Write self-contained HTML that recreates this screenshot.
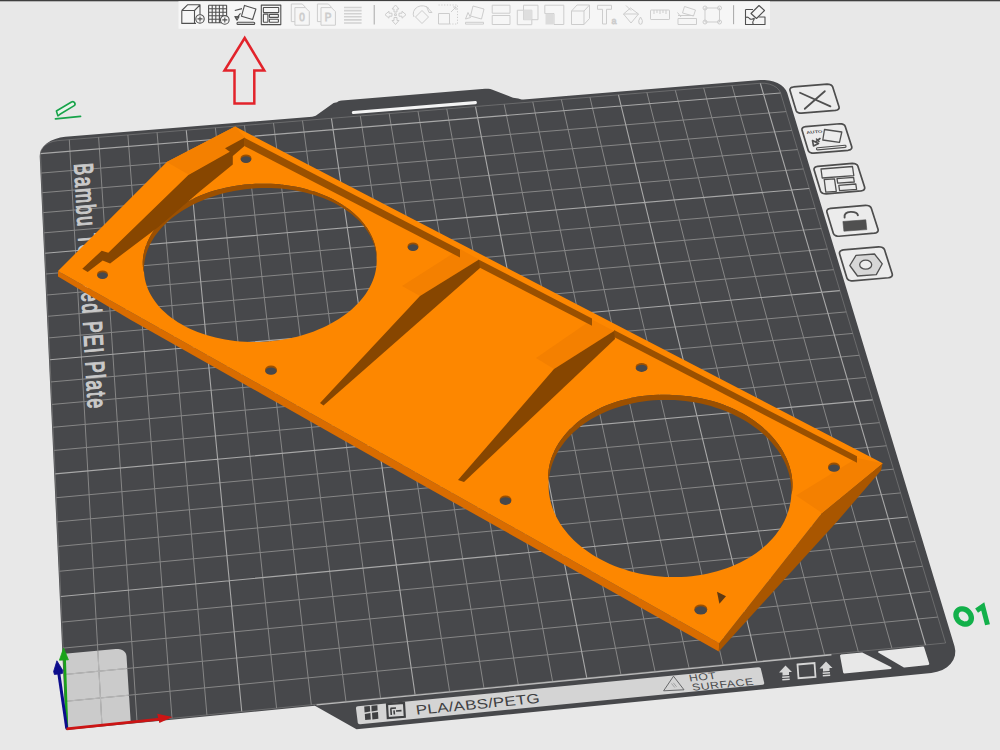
<!DOCTYPE html><html><head><meta charset="utf-8"><style>
html,body{margin:0;padding:0;background:#e8e8e8;width:1000px;height:750px;overflow:hidden}
svg{position:absolute;left:0;top:0}
text{opacity:0.999}
</style></head><body>
<svg width="1000" height="750" viewBox="0 0 1000 750">
<rect x="0" y="0" width="1000" height="750" fill="#e8e8e8"/>
<path d="M65.86,730.01 L39.71,156.21 L40.07,152.79 L41.43,149.41 L43.73,146.22 L46.90,143.34 L50.80,140.87 L55.29,138.91 L60.19,137.53 L65.32,136.78 L312.19,116.64 L312.19,116.64 L314.04,116.32 L315.71,115.71 L317.11,114.84 L333.58,102.96 L337.05,102.18 L338.43,101.31 L340.10,100.71 L341.93,100.40 L485.08,88.77 L486.51,88.66 L488.38,88.66 L490.20,88.99 L491.82,89.60 L513.04,97.79 L518.22,98.44 L519.85,99.06 L521.67,99.38 L523.56,99.39 L760.24,80.08 L764.73,80.00 L769.21,80.49 L773.52,81.53 L777.49,83.08 L780.97,85.08 L783.83,87.46 L785.96,90.13 L787.26,92.98 L954.51,646.18 L955.32,650.84 L954.94,655.45 L953.38,659.83 L950.69,663.80 L946.97,667.22 L942.37,669.94 L937.07,671.86 L931.27,672.90 L356.51,729.28 L314.91,705.76 Z" fill="#47484b"/>
<path d="M67.91,728.43 L130.71,722.32 L126.46,655.80 L125.98,653.79 L124.83,651.99 L123.09,650.52 L120.88,649.47 L118.34,648.92 L115.66,648.91 L64.46,653.79 Z" fill="#cbcbcb"/>
<path d="M101.97,725.12L69.31,139.71M137.02,721.70L98.61,137.32M172.00,718.30L127.88,134.93M206.92,714.90L157.09,132.54M276.56,708.12L215.39,127.78M311.29,704.74L244.47,125.41M345.95,701.37L273.51,123.03M380.54,698.00L302.50,120.67M449.54,691.29L360.34,115.94M483.95,687.94L389.20,113.58M518.29,684.60L418.01,111.23M552.57,681.26L446.78,108.88M620.93,674.61L504.18,104.19M655.02,671.29L532.81,101.85M689.05,667.98L561.40,99.52M723.01,664.67L589.95,97.19M790.75,658.08L646.91,92.54M824.53,654.79L675.32,90.22M858.24,651.51L703.70,87.90M891.90,648.24L732.02,85.58M65.60,701.32L937.83,617.06M64.37,674.51L930.16,591.50M63.16,648.11L922.60,566.31M61.97,622.11L915.16,541.49M59.64,571.24L900.59,492.93M58.50,546.37L893.46,469.17M57.37,521.86L886.43,445.75M56.26,497.70L879.50,422.65M54.09,450.41L865.93,377.43M53.03,427.27L859.29,355.29M51.99,404.45L852.73,333.45M50.95,381.95L846.27,311.91M48.93,337.88L833.61,269.69M47.94,316.29L827.40,249.00M46.97,294.99L821.27,228.59M46.00,273.98L815.23,208.45M44.11,232.80L803.38,168.95M43.19,212.62L797.57,149.59M42.27,192.70L791.83,130.47M41.37,173.04L786.17,111.59" stroke="#868686" stroke-width="1" fill="none"/>
<path d="M241.77,711.51L186.26,130.16M415.08,694.64L331.44,118.30M586.78,677.93L475.50,106.54M756.91,661.37L618.45,94.86M925.49,644.97L760.31,83.27M60.79,596.49L907.82,517.04M55.17,473.89L872.67,399.88M49.94,359.76L839.90,290.65M45.05,253.26L809.27,188.57M40.48,153.63L780.58,92.96" stroke="#a8a8a8" stroke-width="1.1" fill="none"/>
<path d="M945.62,643.01 L780.58,92.96 L779.14,90.13 L776.64,87.60 L773.26,85.53 L769.22,84.06 L764.81,83.29 L760.31,83.27 L57.57,140.67 L53.03,141.43 L48.84,142.93 L45.27,145.05 L42.58,147.67 L40.95,150.59 L40.48,153.63 L66.85,728.53 Z" stroke="#868686" stroke-width="0.8" fill="none" opacity="0.7"/>
<path d="M101.92,724.29L97.85,651.39M67.35,701.15L128.28,695.26M66.10,674.35L126.58,668.55" stroke="#bababa" stroke-width="1" fill="none"/>
<line x1="353.39" y1="112.52" x2="475.31" y2="102.57" stroke="#f4f4f4" stroke-width="3.2" stroke-linecap="round"/>
<path d="M760.76,668.59 L759.89,667.52 L758.34,667.20 L357.79,706.24 L356.38,706.86 L355.92,708.07 L357.80,722.78 L358.56,723.88 L360.10,724.21 L762.63,684.78 L763.96,684.16 L764.28,682.97 Z" fill="#d4d4d4"/>
<line x1="316.57" y1="704.91" x2="831.45" y2="654.79" stroke="#b9b9b9" stroke-width="1.4"/>
<path d="M841.02,655.62 L862.26,653.55 L890.53,667.88 L844.15,672.42 Z" fill="#e8e8e8" stroke="#e8e8e8" stroke-width="2" stroke-linejoin="round"/>
<path d="M879.11,651.91 L923.16,647.62 L928.28,663.91 L904.39,666.52 Z" fill="#e8e8e8" stroke="#e8e8e8" stroke-width="2" stroke-linejoin="round"/>
<path d="M779,672.5 L785.5,665.5 L792,672.0 L789,672.0 L789,675.0 L782.5,675.5 L782.5,672.5 Z" fill="#d6d6d6"/><path d="M782.2,677.3 L789.5,676.8 M782.3,679.8 L789.7,679.3" stroke="#d6d6d6" stroke-width="1.5"/>
<path d="M819.5,668.5 L826.0,661.5 L832.5,668.0 L829.5,668.0 L829.5,671.0 L823.0,671.5 L823.0,668.5 Z" fill="#d6d6d6"/><path d="M822.7,673.3 L830.0,672.8 M822.8,675.8 L830.2,675.3" stroke="#d6d6d6" stroke-width="1.5"/>
<path d="M797.5,664.5 L814.5,663 L815.5,677 L798.5,678.2 Z" fill="none" stroke="#d6d6d6" stroke-width="1.8"/>
<text transform="matrix(3.4694,-0.3395,0.3938,2.7213,416.59,714.81)" font-family="Liberation Sans" font-size="4.9" fill="#3f4042" font-weight="normal" text-anchor="start" letter-spacing="0.05" >PLA/ABS/PETG</text>
<path d="M364.2,706.5 L369.8,706 L370.2,711.6 L364.6,712.6 Z M371.4,705.8 L377.4,705.3 L377.6,710.6 L371.6,711.4 Z M364.8,714 L370.4,713 L370.8,719.6 L365.2,720 Z M372,712.8 L378,712 L378.4,718.8 L372.4,719.4 Z" fill="#3f4042"/>
<path d="M387,704.2 L404,702.8 L404.8,716.8 L387.8,718 Z" fill="none" stroke="#3f4042" stroke-width="2.2"/>
<path d="M390.5,708.4 L396,708 M390.8,708.4 L391.3,715 M394,710.3 L394.4,714.5 M396,711 L401.5,710.6" fill="none" stroke="#3f4042" stroke-width="1.6"/>
<path d="M673.5,676.2 L684,689.8 L663.6,690.8 Z" fill="none" stroke="#5a5b5d" stroke-width="0.9" stroke-linejoin="round"/>
<path d="M671.5,683.5 L674.8,687.5 M673.3,682.8 L676.6,686.8" fill="none" stroke="#8a8b8d" stroke-width="0.7"/>
<text transform="matrix(3.4124,-0.3334,0.5979,2.6710,689.65,681.52)" font-family="Liberation Sans" font-size="3.6" fill="#4a4b4d" font-weight="normal" text-anchor="start" letter-spacing="0.15" >HOT</text>
<text transform="matrix(3.4211,-0.3351,0.6019,2.6851,692.77,690.80)" font-family="Liberation Sans" font-size="3.6" fill="#4a4b4d" font-weight="normal" text-anchor="start" letter-spacing="0.15" >SURFACE</text>
<text transform="matrix(0.1106,1.9410,-2.9566,0.2434,74.23,164.07)" font-family="Liberation Sans" font-size="9.0" fill="#c9c9c9" font-weight="normal" text-anchor="start" letter-spacing="0.9" stroke="#c9c9c9" stroke-width="0.45">Bambu Textured PEI Plate</text>
<path d="M970.97,615.71 L970.46,614.41 L969.73,613.16 L968.82,612.02 L967.76,611.01 L966.57,610.16 L965.29,609.50 L963.97,609.06 L962.63,608.84 L961.33,608.84 L960.10,609.08 L958.97,609.54 L957.99,610.21 L957.18,611.07 L956.56,612.09 L956.16,613.24 L955.99,614.49 L956.05,615.80 L956.34,617.13 L956.86,618.44 L957.58,619.69 L958.49,620.84 L959.55,621.85 L960.74,622.70 L962.02,623.37 L963.35,623.82 L964.69,624.04 L966.00,624.03 L967.24,623.79 L968.37,623.33 L969.35,622.66 L970.16,621.79 L970.78,620.77 L971.17,619.61 L971.34,618.36 L971.27,617.04 Z" fill="none" stroke="#12b04a" stroke-width="5.4"/>
<path d="M976.59,610.67 L982.76,606.38 L987.50,624.75" fill="none" stroke="#12b04a" stroke-width="5.0" stroke-linejoin="miter"/>
<path d="M832.63,86.80 L831.93,85.70 L830.64,84.82 L828.98,84.30 L827.18,84.22 L793.56,86.97 L791.90,87.34 L790.63,88.10 L789.94,89.14 L789.93,90.30 L796.09,110.58 L796.79,111.70 L798.07,112.59 L799.75,113.12 L801.57,113.21 L835.48,110.41 L837.15,110.03 L838.42,109.26 L839.10,108.21 L839.08,107.04 Z" fill="#ececec" stroke="#4d4d4d" stroke-width="1.7" stroke-linejoin="round"/>
<path d="M845.25,126.42 L844.53,125.29 L843.23,124.39 L841.54,123.86 L839.71,123.77 L805.65,126.60 L803.97,126.97 L802.68,127.76 L801.99,128.82 L801.99,130.01 L808.20,150.47 L808.91,151.62 L810.21,152.54 L811.92,153.08 L813.76,153.17 L848.12,150.29 L849.81,149.91 L851.09,149.12 L851.78,148.04 L851.75,146.83 Z" fill="#ececec" stroke="#4d4d4d" stroke-width="1.7" stroke-linejoin="round"/>
<path d="M857.91,166.16 L857.18,165.00 L855.85,164.08 L854.13,163.53 L852.29,163.44 L817.78,166.34 L816.07,166.73 L814.77,167.53 L814.07,168.63 L814.08,169.85 L820.52,191.07 L821.24,192.25 L822.57,193.19 L824.30,193.75 L826.17,193.84 L860.98,190.88 L862.70,190.49 L863.99,189.68 L864.68,188.57 L864.65,187.33 Z" fill="#ececec" stroke="#4d4d4d" stroke-width="1.7" stroke-linejoin="round"/>
<path d="M871.30,208.19 L870.55,207.00 L869.20,206.04 L867.46,205.48 L865.58,205.39 L830.60,208.37 L828.88,208.77 L827.56,209.59 L826.85,210.72 L826.87,211.98 L833.37,233.39 L834.11,234.60 L835.46,235.57 L837.21,236.15 L839.10,236.24 L874.39,233.20 L876.13,232.80 L877.44,231.96 L878.13,230.82 L878.10,229.55 Z" fill="#ececec" stroke="#4d4d4d" stroke-width="1.7" stroke-linejoin="round"/>
<path d="M884.54,249.77 L883.78,248.54 L882.40,247.56 L880.63,246.98 L878.73,246.89 L843.29,249.95 L841.54,250.36 L840.21,251.21 L839.50,252.37 L839.52,253.66 L846.89,277.96 L847.65,279.21 L849.02,280.21 L850.81,280.80 L852.73,280.89 L888.52,277.77 L890.28,277.36 L891.61,276.50 L892.30,275.32 L892.26,274.01 Z" fill="#ececec" stroke="#4d4d4d" stroke-width="1.7" stroke-linejoin="round"/>
<path d="M800,92.8 L830.4,106.4 M804.8,108.8 L824.8,91.2" stroke="#505050" fill="none" stroke-linejoin="round" stroke-linecap="round" stroke-width="1.8"/>
<path d="M824.5,129.5 L841.8,132 L839.5,142.4 L822.8,140 Z" stroke="#505050" fill="none" stroke-linejoin="round" stroke-linecap="round" stroke-width="1.3"/>
<path d="M817.5,148.8 L845,146.3" stroke="#505050" fill="none" stroke-linejoin="round" stroke-linecap="round" stroke-width="3.2"/>
<path d="M817.5,148.8 L845,146.3" stroke="#ececec" stroke-width="1" stroke-linecap="round"/>
<text transform="matrix(2.8718,-0.2388,0.5800,1.9034,806.71,133.91)" font-family="Liberation Sans" font-size="2.0" fill="#505050" font-weight="bold" text-anchor="start" letter-spacing="0" opacity="0.99">AUTO</text>
<path d="M812.5,140.5 L818.5,143.5 L813.5,146 Z M815.5,142 L820,138.5 M816.5,139 L819,141.5" stroke="#505050" fill="none" stroke-linejoin="round" stroke-linecap="round" stroke-width="1.6" fill="#505050"/>
<path d="M821,169 L852.5,166.5 L853.8,175.7 L822.2,178 Z" stroke="#505050" fill="none" stroke-linejoin="round" stroke-linecap="round" stroke-width="1.3"/>
<path d="M824.2,179.5 L834.5,178.8 L836.3,191.3 L825.8,192.1 Z" stroke="#505050" fill="none" stroke-linejoin="round" stroke-linecap="round" stroke-width="1.3"/>
<path d="M837,178.6 L853.6,177.4 L854.3,182 L837.7,183.2 Z" stroke="#505050" fill="none" stroke-linejoin="round" stroke-linecap="round" stroke-width="1.3"/>
<path d="M838.8,185.4 L855.8,184 L856.6,189.3 L839.6,190.6 Z" stroke="#505050" fill="none" stroke-linejoin="round" stroke-linecap="round" stroke-width="1.3"/>
<path d="M842.9,221.5 L865.8,219.8 L866.8,229.6 L843.9,231.2 Z" fill="#505050" stroke="#505050" stroke-width="0.6"/>
<path d="M844.6,217.6 Q843.8,212.2 850.5,211.9 Q857.2,211.7 857.9,215.2" stroke="#505050" fill="none" stroke-linejoin="round" stroke-linecap="round" stroke-width="1.9"/>
<path d="M849.8,265.5 L856,255.3 L874.5,254 L882.3,263.8 L876.3,274.6 L857.5,276 Z" fill="#d7d7d7" stroke="#505050" fill="none" stroke-linejoin="round" stroke-linecap="round" stroke-width="1.3"/>
<ellipse cx="865.7" cy="264.7" rx="6" ry="4.5" fill="#ececec" stroke="#505050" fill="none" stroke-linejoin="round" stroke-linecap="round" stroke-width="1.3"/>
<polygon points="58.0,271.0 719.2,643.2 718.8,651.5 420.0,483.5 130.0,319.5 58.0,276.5" fill="#d96c00"/>
<polygon points="882.6,463.3 822.0,513.0 719.2,643.2 718.8,651.5 838.0,520.5 881.0,470.5" fill="#a95600"/>
<path d="M235.2,126.6 L882.6,463.3 L822.0,513.0 L719.2,643.2 L58.0,271.0 L166.8,162.0 Z M376.57,257.68 L376.67,261.04 L376.55,264.39 L376.20,267.75 L375.64,271.11 L374.86,274.45 L373.86,277.77 L372.64,281.07 L371.21,284.34 L369.56,287.57 L367.71,290.76 L365.66,293.90 L363.40,296.99 L360.95,300.01 L358.31,302.97 L355.48,305.86 L352.47,308.66 L349.28,311.39 L345.93,314.03 L342.41,316.57 L338.73,319.01 L334.91,321.36 L330.94,323.59 L326.84,325.71 L322.61,327.72 L318.27,329.61 L313.81,331.38 L309.25,333.01 L304.60,334.52 L299.86,335.90 L295.05,337.14 L290.17,338.25 L285.24,339.21 L280.26,340.04 L275.24,340.72 L270.19,341.26 L265.12,341.65 L260.05,341.89 L254.97,341.99 L249.90,341.95 L244.86,341.75 L239.84,341.41 L234.87,340.93 L229.94,340.30 L225.06,339.53 L220.26,338.61 L215.53,337.56 L210.89,336.37 L206.34,335.04 L201.90,333.58 L197.56,331.98 L193.35,330.26 L189.26,328.42 L185.30,326.45 L181.49,324.37 L177.83,322.18 L174.33,319.87 L170.99,317.46 L167.82,314.96 L164.83,312.35 L162.02,309.66 L159.39,306.88 L156.96,304.02 L154.73,301.09 L152.69,298.09 L150.86,295.03 L149.24,291.90 L147.83,288.73 L146.63,285.51 L145.65,282.26 L144.89,278.97 L144.35,275.65 L144.03,272.32 L143.15,268.96 L142.79,265.52 L142.73,262.02 L142.95,258.49 L143.45,254.94 L144.20,251.38 L145.21,247.82 L146.47,244.28 L147.98,240.77 L149.73,237.29 L151.72,233.87 L153.95,230.51 L156.39,227.21 L159.05,224.00 L161.92,220.86 L165.00,217.82 L168.26,214.88 L171.72,212.05 L175.34,209.32 L179.14,206.71 L183.10,204.23 L187.21,201.87 L191.46,199.64 L195.84,197.54 L200.34,195.59 L204.96,193.77 L209.68,192.10 L214.49,190.58 L219.39,189.20 L224.37,187.97 L229.40,186.90 L234.49,185.98 L239.63,185.22 L244.80,184.61 L249.99,184.16 L255.20,183.86 L260.40,183.69 L265.61,183.67 L270.80,183.81 L275.96,184.11 L281.09,184.56 L286.18,185.16 L291.21,185.91 L296.17,186.81 L301.07,187.86 L305.88,189.05 L310.60,190.38 L315.22,191.85 L319.74,193.46 L324.13,195.21 L328.40,197.08 L332.53,199.07 L336.52,201.19 L340.36,203.43 L344.05,205.78 L347.57,208.24 L350.92,210.80 L354.09,213.47 L357.07,216.22 L359.87,219.06 L362.46,221.99 L364.86,224.99 L367.05,228.06 L369.03,231.20 L370.79,234.39 L372.33,237.63 L373.64,240.91 L374.73,244.23 L375.58,247.58 L376.19,250.94 L376.55,254.31 Z M791.33,494.86 L791.02,498.71 L790.47,502.54 L789.69,506.34 L788.69,510.11 L787.45,513.84 L786.00,517.52 L784.33,521.14 L782.43,524.70 L780.33,528.20 L778.01,531.61 L775.49,534.95 L772.76,538.20 L769.84,541.35 L766.73,544.40 L763.44,547.35 L759.97,550.18 L756.33,552.90 L752.52,555.49 L748.56,557.96 L744.44,560.29 L740.19,562.49 L735.80,564.54 L731.29,566.45 L726.66,568.22 L721.92,569.83 L717.08,571.29 L712.15,572.58 L707.15,573.72 L702.07,574.70 L696.93,575.51 L691.74,576.16 L686.51,576.64 L681.25,576.95 L675.96,577.10 L670.67,577.07 L665.37,576.88 L660.08,576.52 L654.81,575.99 L649.57,575.29 L644.37,574.43 L639.22,573.41 L634.12,572.22 L629.10,570.88 L624.15,569.37 L619.29,567.72 L614.52,565.91 L609.87,563.96 L605.32,561.86 L600.90,559.62 L596.61,557.25 L592.46,554.74 L588.46,552.11 L584.61,549.36 L580.93,546.50 L577.41,543.52 L574.08,540.44 L570.92,537.26 L567.95,533.98 L565.18,530.62 L562.61,527.18 L560.24,523.67 L558.08,520.09 L556.13,516.45 L554.40,512.75 L552.89,509.01 L551.60,505.23 L550.54,501.42 L549.71,497.58 L549.10,493.73 L548.72,489.87 L548.58,486.00 L548.67,482.14 L548.15,478.20 L548.19,474.23 L548.56,470.25 L549.21,466.26 L550.15,462.29 L551.35,458.35 L552.82,454.44 L554.55,450.59 L556.53,446.79 L558.76,443.07 L561.23,439.43 L563.93,435.89 L566.86,432.44 L570.00,429.11 L573.35,425.90 L576.91,422.82 L580.65,419.87 L584.58,417.06 L588.68,414.40 L592.95,411.89 L597.36,409.54 L601.92,407.35 L606.61,405.32 L611.43,403.47 L616.36,401.78 L621.38,400.27 L626.50,398.94 L631.70,397.79 L636.97,396.82 L642.30,396.03 L647.67,395.42 L653.09,395.00 L658.53,394.76 L663.98,394.70 L669.44,394.82 L674.89,395.13 L680.35,395.44 L685.78,395.93 L691.19,396.60 L696.56,397.45 L701.89,398.47 L707.15,399.68 L712.35,401.05 L717.47,402.60 L722.50,404.32 L727.43,406.20 L732.24,408.25 L736.94,410.46 L741.51,412.82 L745.94,415.34 L750.22,418.00 L754.34,420.80 L758.29,423.74 L762.07,426.81 L765.66,430.00 L769.06,433.31 L772.25,436.73 L775.24,440.25 L778.01,443.87 L780.55,447.57 L782.87,451.35 L784.95,455.19 L786.78,459.09 L788.37,463.04 L789.71,467.02 L790.79,471.03 L791.61,475.05 L792.16,479.07 L792.45,483.07 L792.45,487.05 L792.15,490.99 Z" fill="#fd8700" fill-rule="evenodd"/>
<path d="M376.57,257.68 L376.67,261.04 L376.55,264.39 L376.20,267.75 L375.64,271.11 L374.86,274.45 L373.86,277.77 L372.64,281.07 L371.21,284.34 L369.56,287.57 L367.71,290.76 L365.66,293.90 L363.40,296.99 L360.95,300.01 L358.31,302.97 L355.48,305.86 L352.47,308.66 L349.28,311.39 L345.93,314.03 L342.41,316.57 L338.73,319.01 L334.91,321.36 L330.94,323.59 L326.84,325.71 L322.61,327.72 L318.27,329.61 L313.81,331.38 L309.25,333.01 L304.60,334.52 L299.86,335.90 L295.05,337.14 L290.17,338.25 L285.24,339.21 L280.26,340.04 L275.24,340.72 L270.19,341.26 L265.12,341.65 L260.05,341.89 L254.97,341.99 L249.90,341.95 L244.86,341.75 L239.84,341.41 L234.87,340.93 L229.94,340.30 L225.06,339.53 L220.26,338.61 L215.53,337.56 L210.89,336.37 L206.34,335.04 L201.90,333.58 L197.56,331.98 L193.35,330.26 L189.26,328.42 L185.30,326.45 L181.49,324.37 L177.83,322.18 L174.33,319.87 L170.99,317.46 L167.82,314.96 L164.83,312.35 L162.02,309.66 L159.39,306.88 L156.96,304.02 L154.73,301.09 L152.69,298.09 L150.86,295.03 L149.24,291.90 L147.83,288.73 L146.63,285.51 L145.65,282.26 L144.89,278.97 L144.35,275.65 L144.03,272.32 L143.15,268.96 L142.79,265.52 L142.73,262.02 L142.95,258.49 L143.45,254.94 L144.20,251.38 L145.21,247.82 L146.47,244.28 L147.98,240.77 L149.73,237.29 L151.72,233.87 L153.95,230.51 L156.39,227.21 L159.05,224.00 L161.92,220.86 L165.00,217.82 L168.26,214.88 L171.72,212.05 L175.34,209.32 L179.14,206.71 L183.10,204.23 L187.21,201.87 L191.46,199.64 L195.84,197.54 L200.34,195.59 L204.96,193.77 L209.68,192.10 L214.49,190.58 L219.39,189.20 L224.37,187.97 L229.40,186.90 L234.49,185.98 L239.63,185.22 L244.80,184.61 L249.99,184.16 L255.20,183.86 L260.40,183.69 L265.61,183.67 L270.80,183.81 L275.96,184.11 L281.09,184.56 L286.18,185.16 L291.21,185.91 L296.17,186.81 L301.07,187.86 L305.88,189.05 L310.60,190.38 L315.22,191.85 L319.74,193.46 L324.13,195.21 L328.40,197.08 L332.53,199.07 L336.52,201.19 L340.36,203.43 L344.05,205.78 L347.57,208.24 L350.92,210.80 L354.09,213.47 L357.07,216.22 L359.87,219.06 L362.46,221.99 L364.86,224.99 L367.05,228.06 L369.03,231.20 L370.79,234.39 L372.33,237.63 L373.64,240.91 L374.73,244.23 L375.58,247.58 L376.19,250.94 L376.55,254.31 Z M376.57,257.68 L376.67,261.04 L376.55,264.39 L376.20,267.75 L375.64,271.11 L374.86,274.45 L373.86,277.77 L372.64,281.07 L371.21,284.34 L369.56,287.57 L367.71,290.76 L365.66,293.90 L363.40,296.99 L360.95,300.01 L358.31,302.97 L355.48,305.86 L352.47,308.66 L349.28,311.39 L345.93,314.03 L342.41,316.57 L338.73,319.01 L334.91,321.36 L330.94,323.59 L326.84,325.71 L322.61,327.72 L318.27,329.61 L313.81,331.38 L309.25,333.01 L304.60,334.52 L299.86,335.90 L295.05,337.14 L290.17,338.25 L285.24,339.21 L280.26,340.04 L275.24,340.72 L270.19,341.26 L265.12,341.65 L260.05,341.89 L254.97,341.99 L249.90,341.95 L244.86,341.75 L239.84,341.41 L234.87,340.93 L229.94,340.30 L225.06,339.53 L220.26,338.61 L215.53,337.56 L210.89,336.37 L206.34,335.04 L201.90,333.58 L197.56,331.98 L193.35,330.26 L189.26,328.42 L185.30,326.45 L181.49,324.37 L177.83,322.18 L174.33,319.87 L170.99,317.46 L167.82,314.96 L164.83,312.35 L162.02,309.66 L159.39,306.88 L156.96,304.02 L154.73,301.09 L152.69,298.09 L150.86,295.03 L149.24,291.90 L147.83,288.73 L146.63,285.51 L145.65,282.26 L144.89,278.97 L144.35,275.65 L144.03,272.32 L143.93,268.96 L144.05,265.61 L144.40,262.25 L144.96,258.89 L145.74,255.55 L146.74,252.23 L147.96,248.93 L149.39,245.66 L151.04,242.43 L152.89,239.24 L154.94,236.10 L157.20,233.01 L159.65,229.99 L162.29,227.03 L165.12,224.14 L168.13,221.34 L171.32,218.61 L174.67,215.97 L178.19,213.43 L181.87,210.99 L185.69,208.64 L189.66,206.41 L193.76,204.29 L197.99,202.28 L202.33,200.39 L206.79,198.62 L211.35,196.99 L216.00,195.48 L220.74,194.10 L225.55,192.86 L230.43,191.75 L235.36,190.79 L240.34,189.96 L245.36,189.28 L250.41,188.74 L255.48,188.35 L260.55,188.11 L265.63,188.01 L270.70,188.05 L275.74,188.25 L280.76,188.59 L285.73,189.07 L290.66,189.70 L295.54,190.47 L300.34,191.39 L305.07,192.44 L309.71,193.63 L314.26,194.96 L318.70,196.42 L323.04,198.02 L327.25,199.74 L331.34,201.58 L335.30,203.55 L339.11,205.63 L342.77,207.82 L346.27,210.13 L349.61,212.54 L352.78,215.04 L355.77,217.65 L358.58,220.34 L361.21,223.12 L363.64,225.98 L365.87,228.91 L367.91,231.91 L369.74,234.97 L371.36,238.10 L372.77,241.27 L373.97,244.49 L374.95,247.74 L375.71,251.03 L376.25,254.35 Z" fill="#9c5000" fill-rule="evenodd"/>
<path d="M791.33,494.86 L791.02,498.71 L790.47,502.54 L789.69,506.34 L788.69,510.11 L787.45,513.84 L786.00,517.52 L784.33,521.14 L782.43,524.70 L780.33,528.20 L778.01,531.61 L775.49,534.95 L772.76,538.20 L769.84,541.35 L766.73,544.40 L763.44,547.35 L759.97,550.18 L756.33,552.90 L752.52,555.49 L748.56,557.96 L744.44,560.29 L740.19,562.49 L735.80,564.54 L731.29,566.45 L726.66,568.22 L721.92,569.83 L717.08,571.29 L712.15,572.58 L707.15,573.72 L702.07,574.70 L696.93,575.51 L691.74,576.16 L686.51,576.64 L681.25,576.95 L675.96,577.10 L670.67,577.07 L665.37,576.88 L660.08,576.52 L654.81,575.99 L649.57,575.29 L644.37,574.43 L639.22,573.41 L634.12,572.22 L629.10,570.88 L624.15,569.37 L619.29,567.72 L614.52,565.91 L609.87,563.96 L605.32,561.86 L600.90,559.62 L596.61,557.25 L592.46,554.74 L588.46,552.11 L584.61,549.36 L580.93,546.50 L577.41,543.52 L574.08,540.44 L570.92,537.26 L567.95,533.98 L565.18,530.62 L562.61,527.18 L560.24,523.67 L558.08,520.09 L556.13,516.45 L554.40,512.75 L552.89,509.01 L551.60,505.23 L550.54,501.42 L549.71,497.58 L549.10,493.73 L548.72,489.87 L548.58,486.00 L548.67,482.14 L548.15,478.20 L548.19,474.23 L548.56,470.25 L549.21,466.26 L550.15,462.29 L551.35,458.35 L552.82,454.44 L554.55,450.59 L556.53,446.79 L558.76,443.07 L561.23,439.43 L563.93,435.89 L566.86,432.44 L570.00,429.11 L573.35,425.90 L576.91,422.82 L580.65,419.87 L584.58,417.06 L588.68,414.40 L592.95,411.89 L597.36,409.54 L601.92,407.35 L606.61,405.32 L611.43,403.47 L616.36,401.78 L621.38,400.27 L626.50,398.94 L631.70,397.79 L636.97,396.82 L642.30,396.03 L647.67,395.42 L653.09,395.00 L658.53,394.76 L663.98,394.70 L669.44,394.82 L674.89,395.13 L680.35,395.44 L685.78,395.93 L691.19,396.60 L696.56,397.45 L701.89,398.47 L707.15,399.68 L712.35,401.05 L717.47,402.60 L722.50,404.32 L727.43,406.20 L732.24,408.25 L736.94,410.46 L741.51,412.82 L745.94,415.34 L750.22,418.00 L754.34,420.80 L758.29,423.74 L762.07,426.81 L765.66,430.00 L769.06,433.31 L772.25,436.73 L775.24,440.25 L778.01,443.87 L780.55,447.57 L782.87,451.35 L784.95,455.19 L786.78,459.09 L788.37,463.04 L789.71,467.02 L790.79,471.03 L791.61,475.05 L792.16,479.07 L792.45,483.07 L792.45,487.05 L792.15,490.99 Z M791.33,494.86 L791.02,498.71 L790.47,502.54 L789.69,506.34 L788.69,510.11 L787.45,513.84 L786.00,517.52 L784.33,521.14 L782.43,524.70 L780.33,528.20 L778.01,531.61 L775.49,534.95 L772.76,538.20 L769.84,541.35 L766.73,544.40 L763.44,547.35 L759.97,550.18 L756.33,552.90 L752.52,555.49 L748.56,557.96 L744.44,560.29 L740.19,562.49 L735.80,564.54 L731.29,566.45 L726.66,568.22 L721.92,569.83 L717.08,571.29 L712.15,572.58 L707.15,573.72 L702.07,574.70 L696.93,575.51 L691.74,576.16 L686.51,576.64 L681.25,576.95 L675.96,577.10 L670.67,577.07 L665.37,576.88 L660.08,576.52 L654.81,575.99 L649.57,575.29 L644.37,574.43 L639.22,573.41 L634.12,572.22 L629.10,570.88 L624.15,569.37 L619.29,567.72 L614.52,565.91 L609.87,563.96 L605.32,561.86 L600.90,559.62 L596.61,557.25 L592.46,554.74 L588.46,552.11 L584.61,549.36 L580.93,546.50 L577.41,543.52 L574.08,540.44 L570.92,537.26 L567.95,533.98 L565.18,530.62 L562.61,527.18 L560.24,523.67 L558.08,520.09 L556.13,516.45 L554.40,512.75 L552.89,509.01 L551.60,505.23 L550.54,501.42 L549.71,497.58 L549.10,493.73 L548.72,489.87 L548.58,486.00 L548.67,482.14 L548.98,478.29 L549.53,474.46 L550.31,470.66 L551.31,466.89 L552.55,463.16 L554.00,459.48 L555.67,455.86 L557.57,452.30 L559.67,448.80 L561.99,445.39 L564.51,442.05 L567.24,438.80 L570.16,435.65 L573.27,432.60 L576.56,429.65 L580.03,426.82 L583.67,424.10 L587.48,421.51 L591.44,419.04 L595.56,416.71 L599.81,414.51 L604.20,412.46 L608.71,410.55 L613.34,408.78 L618.08,407.17 L622.92,405.71 L627.85,404.42 L632.85,403.28 L637.93,402.30 L643.07,401.49 L648.26,400.84 L653.49,400.36 L658.75,400.05 L664.04,399.90 L669.33,399.93 L674.63,400.12 L679.92,400.48 L685.19,401.01 L690.43,401.71 L695.63,402.57 L700.78,403.59 L705.88,404.78 L710.90,406.12 L715.85,407.63 L720.71,409.28 L725.48,411.09 L730.13,413.04 L734.68,415.14 L739.10,417.38 L743.39,419.75 L747.54,422.26 L751.54,424.89 L755.39,427.64 L759.07,430.50 L762.59,433.48 L765.92,436.56 L769.08,439.74 L772.05,443.02 L774.82,446.38 L777.39,449.82 L779.76,453.33 L781.92,456.91 L783.87,460.55 L785.60,464.25 L787.11,467.99 L788.40,471.77 L789.46,475.58 L790.29,479.42 L790.90,483.27 L791.28,487.13 L791.42,491.00 Z" fill="#9c5000" fill-rule="evenodd"/>
<polygon points="235.2,126.6 166.8,162.0 188.4,174.5 229.8,151.8 225.0,148.2 244.8,137.4" fill="#f48000"/>
<polygon points="460.0,249.0 479.0,259.5 420.0,296.0 402.0,286.0" fill="#f48000"/>
<polygon points="592.0,319.5 614.0,331.0 554.0,369.0 536.0,358.0" fill="#f48000"/>
<polygon points="796.0,495.4 822.0,513.0 882.6,463.3 857.0,458.0" fill="#f48000"/>
<polygon points="244.8,137.9 460.0,249.8 460.0,257.5 244.8,146.2" fill="#9a5000"/>
<polygon points="479.0,259.7 592.0,318.5 592.0,325.7 479.0,267.3" fill="#9a5000"/>
<polygon points="614.0,329.9 857.0,456.3 857.0,462.8 614.0,337.1" fill="#9a5000"/>
<polygon points="244.8,137.4 225.0,148.2 229.8,151.8 188.4,175.0 108.3,252.7 101.7,250.7 82.3,268.7 87.7,272.0 102.7,260.6 110.1,263.4 158.7,226.7 200.0,191.3 232.8,164.4 232.8,156.0 244.8,145.8" fill="#874600"/>
<polygon points="479.0,259.5 420.0,296.0 320.0,403.0 323.5,405.5 480.0,268.0" fill="#874600"/>
<polygon points="614.0,331.0 554.0,369.0 458.0,480.0 464.0,482.0 615.0,339.0" fill="#874600"/>
<ellipse cx="246" cy="158.4" rx="5.5" ry="4" fill="#9c5000"/>
<ellipse cx="246" cy="159.6" rx="5.2" ry="3.4" fill="#47484b"/>
<ellipse cx="413" cy="246.4" rx="5.5" ry="4" fill="#9c5000"/>
<ellipse cx="413" cy="247.6" rx="5.2" ry="3.4" fill="#47484b"/>
<ellipse cx="102.5" cy="274.4" rx="5.5" ry="4" fill="#9c5000"/>
<ellipse cx="102.5" cy="275.6" rx="5.2" ry="3.4" fill="#47484b"/>
<ellipse cx="271" cy="369.9" rx="6" ry="4.3" fill="#9c5000"/>
<ellipse cx="271" cy="371.1" rx="5.7" ry="3.6999999999999997" fill="#47484b"/>
<ellipse cx="641.6" cy="367.09999999999997" rx="6" ry="4.2" fill="#9c5000"/>
<ellipse cx="641.6" cy="368.3" rx="5.7" ry="3.6" fill="#47484b"/>
<ellipse cx="834" cy="466.9" rx="6" ry="4.3" fill="#9c5000"/>
<ellipse cx="834" cy="468.1" rx="5.7" ry="3.6999999999999997" fill="#47484b"/>
<ellipse cx="505.5" cy="499.9" rx="6" ry="4.5" fill="#9c5000"/>
<ellipse cx="505.5" cy="501.1" rx="5.7" ry="3.9" fill="#47484b"/>
<ellipse cx="700.8" cy="609.1999999999999" rx="6.5" ry="4.8" fill="#9c5000"/>
<ellipse cx="700.8" cy="610.4" rx="6.2" ry="4.2" fill="#47484b"/>
<polygon points="717,591.8 726,596.2 719.4,603.8" fill="#5e3a14"/>
<path d="M66.9,728 L64.6,658" stroke="#1aa31a" stroke-width="2.6"/>
<path d="M63.6,648 L68.4,659.8 L59.4,660.2 Z" fill="#1aa31a" stroke="#1aa31a" stroke-width="0.8" stroke-linejoin="round"/>
<path d="M66.8,728.6 L58.6,672" stroke="#0c0c8c" stroke-width="3"/>
<path d="M56.9,660.8 L62.8,670.5 L62.4,673.5 L54.4,674.5 L53.6,671.5 Z" fill="#0c0c8c" stroke="#0c0c8c" stroke-width="0.8" stroke-linejoin="round"/>
<path d="M66.6,728.8 L160,719.2" stroke="#cc1414" stroke-width="2.8"/>
<path d="M172.5,717 L157.2,713.8 L159.4,723 Z" fill="#cc1414"/>
<path d="M244.7,38 L264.3,70.6 L254.3,70.6 L254.3,103.6 L234.5,103.6 L234.5,70.6 L224.5,70.6 Z" fill="none" stroke="#e2232b" stroke-width="2.5" stroke-linejoin="miter"/>
<g transform="translate(58.6,112.4) rotate(-31)"><path d="M-1.2,-2.3 H16.4 A2.3,2.3 0 0 1 16.4,2.3 H0.2 L-2.4,2.6 Z" fill="#e9f5ec" stroke="#17a34a" stroke-width="1.6" stroke-linejoin="round"/></g>
<path d="M55.5,118.8 L80.5,116.3" stroke="#17a34a" stroke-width="1.8" stroke-linecap="round"/>
<rect x="0" y="0" width="1000" height="1.3" fill="#3f3f3f"/>
<rect x="178.5" y="1.3" width="591.5" height="27.5" fill="#f6f6f6"/>
<path d="M181.8,10.5 L187.5,4.8 L200,4.8 L200,17 M181.8,10.5 L194.5,10.5 L200,4.8 M194.5,10.5 L194.5,23.4 M181.8,10.5 L181.8,23.4 L196,23.4" stroke="#505050" stroke-width="1.1" fill="none" stroke-linejoin="round"/>
<circle cx="200" cy="18.9" r="4.2" fill="#f6f6f6" stroke="#505050" stroke-width="1.1" fill="none" stroke-linejoin="round"/>
<path d="M200,16.4V21.4M197.5,18.9H202.5" stroke="#505050" stroke-width="1.1" fill="none" stroke-linejoin="round"/>
<path d="M208.6,5.3V22.7M208.6,5.3H226.6M212.2,5.3V22.7M208.6,8.8H226.6M215.8,5.3V22.7M208.6,12.3H226.6M219.4,5.3V22.7M208.6,15.7H226.6M223.0,5.3V22.7M208.6,19.2H226.6M226.6,5.3V22.7M208.6,22.7H226.6" stroke="#505050" stroke-width="1.1" fill="none" stroke-linejoin="round"/>
<circle cx="224.8" cy="19.9" r="4.3" fill="#f6f6f6" stroke="#505050" stroke-width="1.1" fill="none" stroke-linejoin="round"/>
<path d="M224.8,17.4V22.4M222.3,19.9H227.3" stroke="#505050" stroke-width="1.1" fill="none" stroke-linejoin="round"/>
<path d="M244.5,5.4 L255.9,9 L252.6,19.5 L241.5,16.2 Z" stroke="#505050" stroke-width="1.1" fill="none" stroke-linejoin="round"/>
<rect x="237" y="22.3" width="17.7" height="2.1" rx="1" stroke="#505050" stroke-width="1.1" fill="none" stroke-linejoin="round"/>
<path d="M234.8,10.5 L242,8.6 M240.5,13.3 L236,18.8 M234.8,16.5 L237,20.2 L239,16.8 Z" stroke="#505050" stroke-width="1.1" fill="none" stroke-linejoin="round"/>
<rect x="261.3" y="5.1" width="19.5" height="19.5" stroke="#505050" stroke-width="1.1" fill="none" stroke-linejoin="round"/>
<rect x="263.4" y="7.5" width="15.3" height="5.1" rx="0.5" stroke="#505050" stroke-width="1.1" fill="none" stroke-linejoin="round"/>
<rect x="263.4" y="14.1" width="4.5" height="8.1" rx="0.5" stroke="#505050" stroke-width="1.1" fill="none" stroke-linejoin="round"/>
<rect x="269.4" y="14.4" width="9" height="3" rx="0.5" stroke="#505050" stroke-width="1.1" fill="none" stroke-linejoin="round"/>
<rect x="269.4" y="19.2" width="9" height="3" rx="0.5" stroke="#505050" stroke-width="1.1" fill="none" stroke-linejoin="round"/>
<path d="M294.90000000000003,21.6 H291.3 V4 H302.3 L305.7,7.6" stroke="#cdcdcd" stroke-width="1" fill="none" stroke-linejoin="round"/>
<path d="M294.90000000000003,7.6 H305.3 L309.3,11.6 V25.2 H294.90000000000003 Z" stroke="#cdcdcd" stroke-width="1" fill="none" stroke-linejoin="round"/>
<text x="302.1" y="21" font-family="Liberation Sans" font-size="10" fill="none" stroke="#cdcdcd" stroke-width="0.8" text-anchor="middle">0</text>
<path d="M321.0,21.6 H317.4 V4 H328.4 L331.79999999999995,7.6" stroke="#cdcdcd" stroke-width="1" fill="none" stroke-linejoin="round"/>
<path d="M321.0,7.6 H331.4 L335.4,11.6 V25.2 H321.0 Z" stroke="#cdcdcd" stroke-width="1" fill="none" stroke-linejoin="round"/>
<text x="328.2" y="21" font-family="Liberation Sans" font-size="10" fill="none" stroke="#cdcdcd" stroke-width="0.8" text-anchor="middle">P</text>
<path d="M344,7.5H361.6M344,10.6H361.6M344,13.7H361.6M344,16.8H361.6M344,19.9H361.6M344,23.0H361.6" stroke="#d2d2d2" stroke-width="1.6" fill="none"/>
<rect x="373.7" y="5" width="1" height="19.5" fill="#a8a8a8"/>
<path d="M395.5,5 L399,9 H397 V12 H394 V9 H392 Z M395.5,24.5 L399,20.5 H397 V17.5 H394 V20.5 H392 Z M385,14.7 L389,11.2 V13.2 H392 V16.2 H389 V18.2 Z M406,14.7 L402,11.2 V13.2 H399 V16.2 H402 V18.2 Z" stroke="#cdcdcd" stroke-width="1" fill="none" stroke-linejoin="round"/>
<rect x="394.6" y="13.8" width="1.8" height="1.8" stroke="#cdcdcd" stroke-width="1" fill="none" stroke-linejoin="round"/>
<path d="M422,10.5 L428.5,17 L422,23.5 L415.5,17 Z M414,17 A9,8 0 0 1 429,8.5" stroke="#cdcdcd" stroke-width="1" fill="none" stroke-linejoin="round"/>
<path d="M426.5,6.5 L432,12.5 L429,12.5 Z" stroke="#cdcdcd" stroke-width="1" fill="none" stroke-linejoin="round"/>
<rect x="438.5" y="13.5" width="11" height="10.5" stroke="#cdcdcd" stroke-width="1" fill="none" stroke-linejoin="round"/>
<path d="M438.5,5 H457.5 V24 H449.5" stroke="#cdcdcd" stroke-width="1" fill="none" stroke-linejoin="round" stroke-dasharray="1.2,1.6"/>
<path d="M451,12 L456,7 M453,7 H456 V10" stroke="#cdcdcd" stroke-width="1" fill="none" stroke-linejoin="round"/>
<path d="M473,6 L484,9 L481.5,19 L470.5,16 Z" stroke="#cdcdcd" stroke-width="1" fill="none" stroke-linejoin="round"/>
<rect x="465.5" y="22.3" width="18" height="1.8" stroke="#cdcdcd" stroke-width="1" fill="none" stroke-linejoin="round"/>
<path d="M468,12.5 L465.5,19 L470.5,17.5 Z" stroke="#cdcdcd" stroke-width="1" fill="none" stroke-linejoin="round"/>
<rect x="492.2" y="5.2" width="17.8" height="8" stroke="#cdcdcd" stroke-width="1" fill="none" stroke-linejoin="round"/>
<rect x="492.2" y="15.5" width="17.8" height="9" stroke="#cdcdcd" stroke-width="1" fill="none" stroke-linejoin="round"/>
<rect x="523.5" y="5.2" width="14.5" height="14.5" stroke="#cdcdcd" stroke-width="1" fill="none" stroke-linejoin="round"/>
<rect x="517.3" y="10.2" width="14.5" height="14.5" stroke="#cdcdcd" stroke-width="1" fill="none" stroke-linejoin="round"/>
<rect x="523.5" y="10.2" width="8.3" height="9.5" fill="#dedede"/>
<path d="M544.8,5.2 H563.8 V24.5 H554 V13.5 H544.8 Z" stroke="#cdcdcd" stroke-width="1" fill="none" stroke-linejoin="round"/>
<rect x="545.5" y="13.5" width="8" height="11" fill="#dcdcdc"/>
<path d="M571.5,11 L577,5 H589.5 V18.5 L584,24.5 H571.5 Z M571.5,11 H584 L589.5,5 M584,11 V24.5" stroke="#cdcdcd" stroke-width="1" fill="none" stroke-linejoin="round"/>
<path d="M597.5,5.3 H611.5 V9.3 H606.5 V24 H602.5 V9.3 H597.5 Z" stroke="#cdcdcd" stroke-width="1" fill="none" stroke-linejoin="round"/>
<text x="611.5" y="24.3" font-family="Liberation Sans" font-size="9" fill="none" stroke="#cdcdcd" stroke-width="0.8">a</text>
<path d="M623.5,14 L630.5,8 L638.5,14 L631,23 Z M623.5,14 H638.5 M626,5.5 L631,10.5" stroke="#cdcdcd" stroke-width="1" fill="none" stroke-linejoin="round"/>
<path d="M640.5,17 Q643.5,21 642,23.5 Q640.5,25 639,23.5 Q637.8,21 640.5,17 Z" stroke="#cdcdcd" stroke-width="1" fill="none" stroke-linejoin="round"/>
<rect x="650.5" y="10" width="19" height="9.5" rx="0.6" stroke="#cdcdcd" stroke-width="1" fill="none" stroke-linejoin="round"/>
<path d="M654,10V14M657,10V13M660,10V14M663,10V13M666,10V14" stroke="#cdcdcd" stroke-width="1" fill="none" stroke-linejoin="round"/>
<rect x="678" y="18.5" width="18.5" height="6" stroke="#cdcdcd" stroke-width="1" fill="none" stroke-linejoin="round"/>
<path d="M682.5,13 L684.5,6.5 L695.5,10 L693.5,16 Z M678,15.5 H694 M677.5,12.5 L681,17" stroke="#cdcdcd" stroke-width="1" fill="none" stroke-linejoin="round"/>
<rect x="705" y="8" width="14.5" height="14" stroke="#cdcdcd" stroke-width="1" fill="none" stroke-linejoin="round"/>
<circle cx="705" cy="8" r="2" stroke="#cdcdcd" stroke-width="1" fill="none" stroke-linejoin="round"/>
<circle cx="719.5" cy="8" r="2" stroke="#cdcdcd" stroke-width="1" fill="none" stroke-linejoin="round"/>
<circle cx="705" cy="22" r="2" stroke="#cdcdcd" stroke-width="1" fill="none" stroke-linejoin="round"/>
<circle cx="719.5" cy="22" r="2" stroke="#cdcdcd" stroke-width="1" fill="none" stroke-linejoin="round"/>
<rect x="733.1" y="5.2" width="1" height="19" fill="#a8a8a8"/>
<path d="M745.5,9.5 H753 M745.5,9.5 V24.5 H765 V17 H758.5 M745.5,17.5 Q748,16.5 749.5,18.5 Q751,20 753.5,18.5 Q755,17.5 753.5,20.5 Q752,22.5 753.5,24.5" stroke="#505050" stroke-width="1.1" fill="none" stroke-linejoin="round"/>
<path d="M751,13.5 L759,5.5 L764.5,10.5 L756.5,18.5 Z" stroke="#505050" stroke-width="1.1" fill="none" stroke-linejoin="round"/>
</svg>
</body></html>
